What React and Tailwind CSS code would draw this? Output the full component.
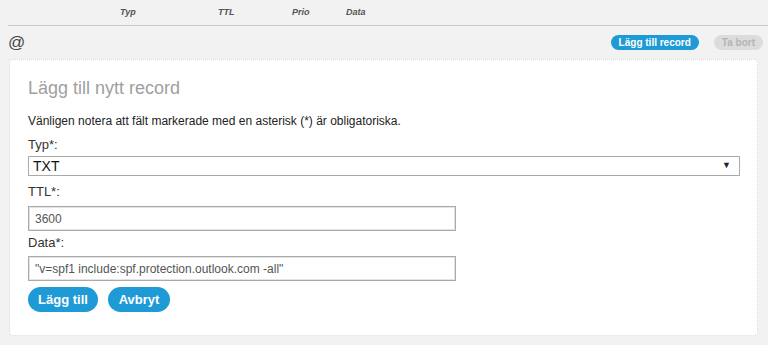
export default function App() {
  return (
    <div className="w-[768px] h-[345px] overflow-hidden bg-[#f2f2f2] font-['Liberation_Sans',Arial,sans-serif] text-[#333]">
      <div className="ml-[8px] h-[26px] border-b border-[#c8c8c8] flex items-center pl-[112px] text-[9px] font-bold italic text-[#555]">
        <span className="w-[98px]">Typ</span>
        <span className="w-[74px]">TTL</span>
        <span className="w-[54px]">Prio</span>
        <span>Data</span>
      </div>

      <div className="h-[33px] flex items-center justify-between pl-[8px] pr-[5px]">
        <span className="text-[17px] text-[#444] leading-none">@</span>
        <div className="flex items-center gap-[15px]">
          <button className="h-[15px] px-[8px] rounded-full bg-[#1e9ad6] text-white text-[10px] font-bold leading-none">
            Lägg till record
          </button>
          <button className="h-[15px] px-[8px] rounded-full bg-[#dcdcdc] text-[#b4b4b4] text-[10px] font-bold leading-none">
            Ta bort
          </button>
        </div>
      </div>

      <div className="ml-[9px] w-[749px] h-[277px] bg-white rounded-[4px] border border-dotted border-[#d8d8d8] pl-[18px] pt-[16px]">
        <h2 className="text-[18px] leading-[24px] text-[#a0a0a0]">Lägg till nytt record</h2>
        <p className="mt-[13px] text-[12px] leading-[16px] text-[#222]">
          Vänligen notera att fält markerade med en asterisk (*) är obligatoriska.
        </p>

        <label className="block mt-[8px] text-[13px] leading-[16px] text-[#333]">Typ*:</label>
        <div className="mt-[3px] w-[712px] h-[20px] border border-[#aaa] flex items-center justify-between pl-[4px] pr-[8px] text-[14px] text-[#111]">
          <span>TXT</span>
          <span className="text-[9px] text-[#222]">▼</span>
        </div>

        <label className="block mt-[8px] text-[13px] leading-[16px] text-[#333]">TTL*:</label>
        <div className="mt-[6px] w-[428px] h-[25px] border border-[#aaa] shadow-[inset_0_0_0_1px_#e4e4e4] flex items-center pl-[6px] text-[12px] text-[#555]">
          3600
        </div>

        <label className="block mt-[4px] text-[13px] leading-[16px] text-[#333]">Data*:</label>
        <div className="mt-[5px] w-[428px] h-[25px] border border-[#aaa] shadow-[inset_0_0_0_1px_#e4e4e4] flex items-center pl-[6px] text-[12px] text-[#555]">
          "v=spf1 include:spf.protection.outlook.com -all"
        </div>

        <div className="mt-[6px] flex gap-[10px]">
          <button className="h-[25px] w-[70px] rounded-full bg-[#1e9ad6] text-white text-[13px] font-bold">
            Lägg till
          </button>
          <button className="h-[25px] w-[62px] rounded-full bg-[#1e9ad6] text-white text-[13px] font-bold">
            Avbryt
          </button>
        </div>
      </div>
    </div>
  );
}
